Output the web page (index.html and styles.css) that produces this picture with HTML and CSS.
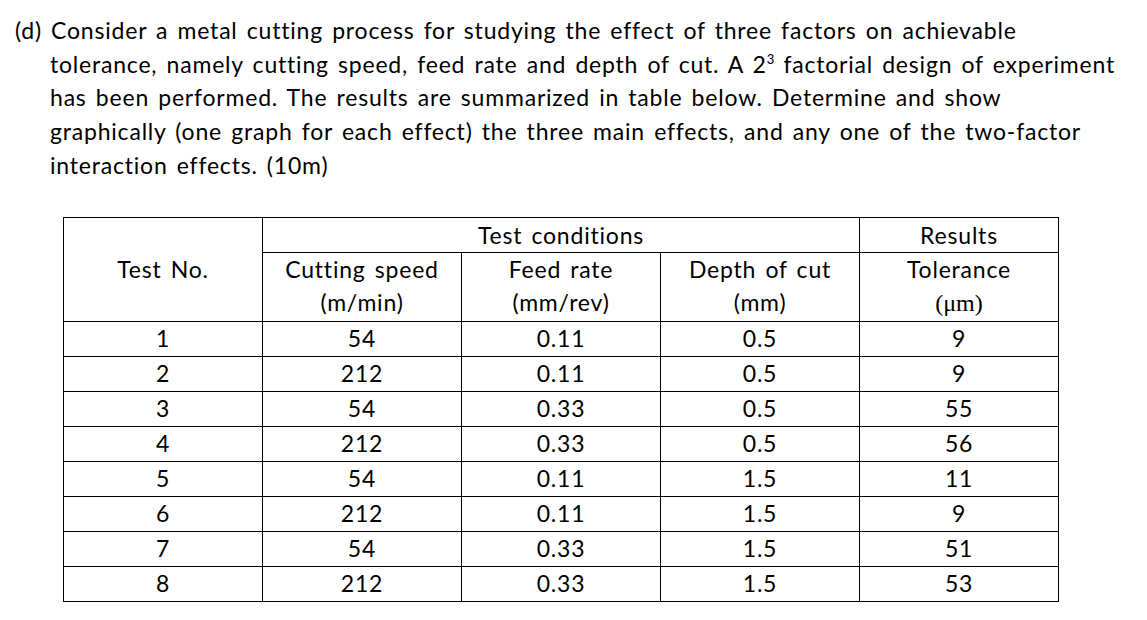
FILE: index.html
```html
<!DOCTYPE html>
<html>
<head>
<meta charset="utf-8">
<link rel="stylesheet" href="styles.css">
</head>
<body>
<p class="question">(d) Consider a metal cutting process for studying the effect of three factors on achievable<br>tolerance, namely cutting speed, feed rate and depth of cut. A 2<sup class="sup">3</sup> factorial design of experiment<br>has been performed. The results are summarized in table below. Determine and show<br>graphically (one graph for each effect) the three main effects, and any one of the two-factor<br>interaction effects. (10m)</p>
<table class="data">
  <colgroup>
    <col class="c">
    <col class="c">
    <col class="c">
    <col class="c">
    <col class="c">
  </colgroup>
  <thead>
    <tr>
      <th rowspan="2">Test No.</th>
      <th colspan="3">Test conditions</th>
      <th>Results</th>
    </tr>
    <tr class="units">
      <th>Cutting speed<br>(m/min)</th>
      <th>Feed rate<br>(mm/rev)</th>
      <th>Depth of cut<br>(mm)</th>
      <th>Tolerance<br><span class="serif">(μm)</span></th>
    </tr>
  </thead>
  <tbody>
    <tr><td>1</td><td>54</td><td>0.11</td><td>0.5</td><td>9</td></tr>
    <tr><td>2</td><td>212</td><td>0.11</td><td>0.5</td><td>9</td></tr>
    <tr><td>3</td><td>54</td><td>0.33</td><td>0.5</td><td>55</td></tr>
    <tr><td>4</td><td>212</td><td>0.33</td><td>0.5</td><td>56</td></tr>
    <tr><td>5</td><td>54</td><td>0.11</td><td>1.5</td><td>11</td></tr>
    <tr><td>6</td><td>212</td><td>0.11</td><td>1.5</td><td>9</td></tr>
    <tr><td>7</td><td>54</td><td>0.33</td><td>1.5</td><td>51</td></tr>
    <tr><td>8</td><td>212</td><td>0.33</td><td>1.5</td><td>53</td></tr>
  </tbody>
</table>
</body>
</html>
```
FILE: styles.css
```css
html, body {
  margin: 0;
  padding: 0;
  background: #fff;
}
body {
  font-family: "Lato", "Liberation Sans", sans-serif;
  color: #000;
  font-size: 23px;
  letter-spacing: 0.8px;
  word-spacing: 2.5px;
}
.question {
  margin: 14px 0 0 0;
  padding-left: 50px;
  text-indent: -35px;
  line-height: 33.7px;
  white-space: nowrap;
}
.sup {
  font-size: 13px;
  line-height: 0;
  letter-spacing: 0;
  vertical-align: 9px;
}
.data {
  margin: 34px 0 0 63px;
  border-collapse: collapse;
  table-layout: fixed;
  width: 995px;
}
.data .c {
  width: 199px;
}
.data th,
.data td {
  border: 1px solid #000;
  padding: 0;
  font-weight: normal;
  text-align: center;
  line-height: 34px;
  vertical-align: middle;
}
.data td {
  padding-bottom: 1px;
  line-height: 33px;
}
.data .units th {
  line-height: 33px;
  padding-bottom: 1px;
}
.serif {
  font-family: "Liberation Serif", serif;
  font-size: 24px;
  letter-spacing: 0;
}
```
